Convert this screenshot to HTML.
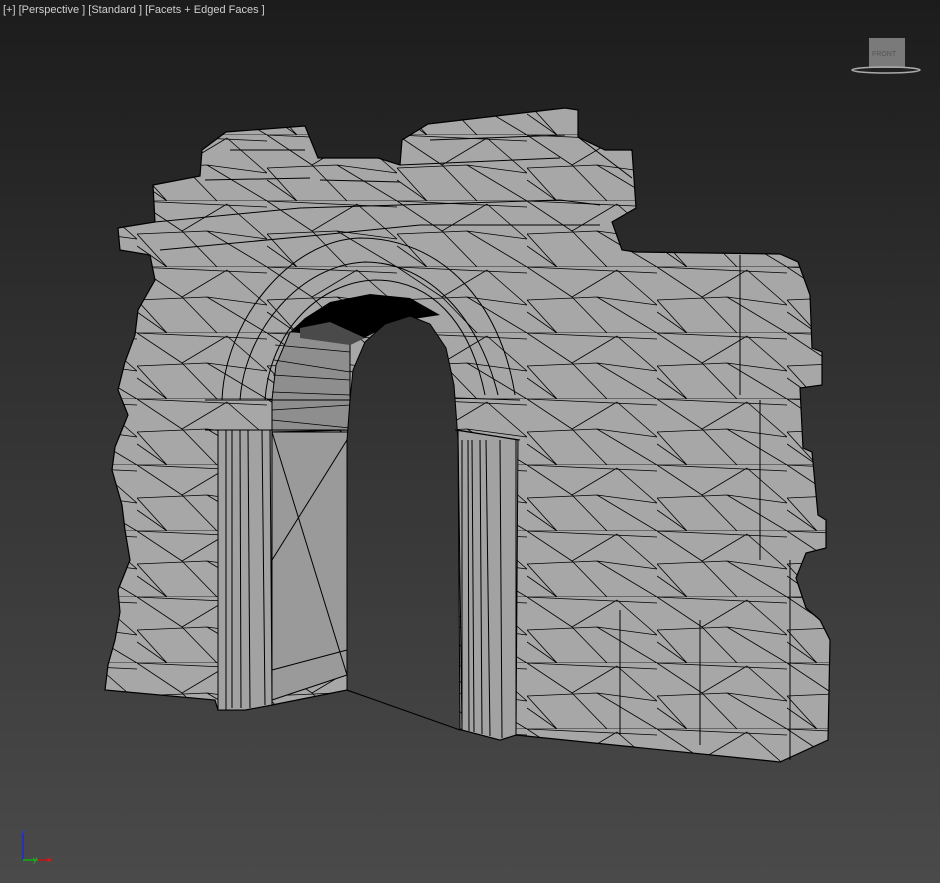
<!DOCTYPE html>
<html><head><meta charset="utf-8"><style>
html,body{margin:0;padding:0;width:940px;height:883px;overflow:hidden;background:#2b2b2b}
svg{position:absolute;left:0;top:0}
.lbl{position:absolute;left:3px;top:4px;font:11px "Liberation Sans",sans-serif;color:#cfcfcf;white-space:nowrap}
</style></head><body>
<svg width="940" height="883" viewBox="0 0 940 883">
<defs>
<linearGradient id="bg" gradientUnits="userSpaceOnUse" x1="0" y1="0" x2="0" y2="883">
<stop offset="0" stop-color="#1c1c1c"/><stop offset="0.35" stop-color="#2e2e2e"/><stop offset="1" stop-color="#4a4a4a"/>
</linearGradient>
<pattern id="tri" patternUnits="userSpaceOnUse" width="130" height="66" x="7" y="3">
<path d="M0,0 L130,6 M0,33 L70,30 L130,38 M0,0 L45,30 L90,3 M45,30 L80,66 M0,33 L30,66 L80,66 M90,3 L130,38 M0,66 L130,66 M70,30 L130,66 M30,66 L0,45" fill="none" stroke="#000" stroke-width="0.8"/>
</pattern>
<clipPath id="wall">
<polygon points="118,228 155,222 153,185 200,176 202,150 226,132 305,126 318,158 378,158 400,165 402,140 428,124 565,108 578,110 578,137 605,150 632,150 636,208 612,222 622,250 636,252 780,254 798,262 810,295 812,348 822,352 822,385 800,388 803,448 812,452 818,515 826,520 826,548 806,553 796,578 806,608 820,620 830,640 828,740 780,762 516,735 500,740 462,730 347,690 272,705 245,710 218,710 215,700 105,690 108,665 115,640 120,612 118,590 130,560 125,530 122,505 112,470 115,447 128,415 118,390 125,362 135,335 138,310 155,280 150,255 120,250"/>
</clipPath>
</defs>
<rect width="940" height="883" fill="url(#bg)"/>
<polygon fill="#a7a7a7" stroke="#000" stroke-width="1.2" points="118,228 155,222 153,185 200,176 202,150 226,132 305,126 318,158 378,158 400,165 402,140 428,124 565,108 578,110 578,137 605,150 632,150 636,208 612,222 622,250 636,252 780,254 798,262 810,295 812,348 822,352 822,385 800,388 803,448 812,452 818,515 826,520 826,548 806,553 796,578 806,608 820,620 830,640 828,740 780,762 516,735 500,740 462,730 347,690 272,705 245,710 218,710 215,700 105,690 108,665 115,640 120,612 118,590 130,560 125,530 122,505 112,470 115,447 128,415 118,390 125,362 135,335 138,310 155,280 150,255 120,250"/>
<g clip-path="url(#wall)">
<rect x="100" y="100" width="740" height="670" fill="url(#tri)"/>
</g>
<polygon fill="#a2a2a2" stroke="#000" stroke-width="1" points="218,430 272,430 272,705 245,710 218,710"/>
<polygon fill="#a2a2a2" stroke="#000" stroke-width="1" points="458,430 518,440 516,735 500,740 462,730"/>
<polygon fill="#8e8e8e" stroke="#000" stroke-width="1" points="272,400 276,365 290,332 350,330 350,430 272,432"/>
<polygon fill="#9a9a9a" stroke="#000" stroke-width="1" points="272,432 350,432 347,675 272,700"/>
<g fill="none" stroke="#000" stroke-width="0.8">
<path d="M275,345 L350,352 M274,360 L350,372 M273,375 L350,380 M272,392 L350,395 M272,410 L350,405 M272,420 L350,428"/>
</g>
<polygon fill="#000" points="290,332 305,318 330,302 370,294 410,298 440,315 420,318 395,322 370,335 350,345 320,335"/>
<polygon fill="#4a4a4a" points="300,328 330,322 365,338 350,345 300,338"/>
<polygon fill="url(#bg)" stroke="#000" stroke-width="1" points="350,400 353,370 365,342 385,324 410,316 430,324 446,348 454,385 458,440 460,730 347,690 347,440"/>
<g fill="none" stroke="#000" stroke-width="1">
<path d="M222,400 C225,320 290,240 360,238 C440,238 500,300 515,395"/>
<path d="M240,400 C245,330 300,265 365,262 C430,262 480,320 498,395"/>
<path d="M265,400 C270,330 320,282 375,280 C430,280 470,320 485,395"/>
<path d="M205,400 L350,400 M455,398 L520,400 M205,430 L345,430 M455,430 L520,440"/>
<path d="M218,430 L218,710 M226,430 L226,710 M232,430 L232,708 M240,430 L241,708 M248,430 L250,708 M262,430 L265,705 M270,430 L272,705"/>
<path d="M462,440 L462,730 M468,440 L469,731 M472,440 L474,732 M480,440 L482,734 M486,440 L490,736 M500,440 L502,738 M516,440 L516,735"/>
<path d="M272,432 L347,675 M272,560 L347,440 M272,670 L347,650"/>
</g>
<g fill="none" stroke="#000" stroke-width="1">
<path d="M155,222 L300,208 L400,205 L560,200 L600,205"/>
<path d="M160,250 L320,235 L420,225 L600,225"/>
<path d="M230,150 L305,150 M205,180 L310,178 M320,180 L400,182 M400,165 L560,158 M430,140 L565,135 M578,137 L632,178"/>
<path d="M740,255 L740,395 M760,400 L760,560 M790,560 L790,760 M620,610 L620,735 M700,620 L700,745"/>
</g>
<rect x="869" y="38" width="36" height="30" fill="#7a7a7a"/>
<text x="872" y="56" font-family="Liberation Sans,sans-serif" font-size="7" fill="#555">FRONT</text>
<ellipse cx="886" cy="70" rx="34" ry="3" fill="none" stroke="#aaa" stroke-width="1.5"/>
<g stroke-width="1.5">
<line x1="23" y1="860" x2="23" y2="833" stroke="#1a2ad0"/>
<line x1="23" y1="860" x2="38" y2="860" stroke="#10b010"/>
<line x1="38" y1="860" x2="52" y2="860" stroke="#d01010"/>
</g>
<text x="21" y="835" font-family="Liberation Sans,sans-serif" font-size="8" fill="#2a3ae0">z</text>
<text x="33" y="862" font-family="Liberation Sans,sans-serif" font-size="8" fill="#20c020">y</text>
<text x="47" y="862" font-family="Liberation Sans,sans-serif" font-size="8" fill="#e02020">x</text>
</svg>
<div class="lbl">[+] [Perspective ] [Standard ] [Facets + Edged Faces ]</div>
</body></html>
